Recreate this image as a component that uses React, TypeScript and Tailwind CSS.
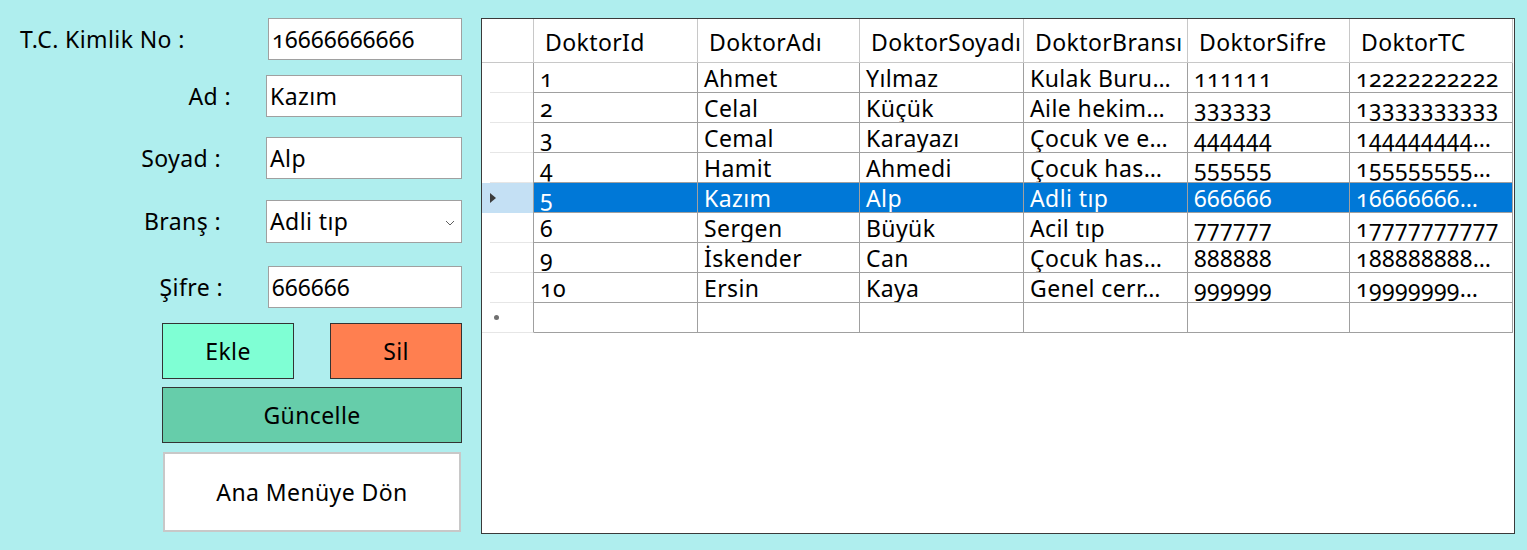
import React from "react";

const FONT = "font-['Noto_Sans',sans-serif] oldstyle-nums tracking-[0.4px]";

const cols = [
  { name: "DoktorId", w: "w-[164px]" },
  { name: "DoktorAdı", w: "w-[162px]" },
  { name: "DoktorSoyadı", w: "w-[164px]" },
  { name: "DoktorBransı", w: "w-[164px]" },
  { name: "DoktorSifre", w: "w-[162px]" },
  { name: "DoktorTC", w: "w-[163px]" },
];

const rows = [
  ["1", "Ahmet", "Yılmaz", "Kulak Buru…", "111111", "12222222222"],
  ["2", "Celal", "Küçük", "Aile hekim…", "333333", "13333333333"],
  ["3", "Cemal", "Karayazı", "Çocuk ve e…", "444444", "144444444…"],
  ["4", "Hamit", "Ahmedi", "Çocuk has…", "555555", "155555555…"],
  ["5", "Kazım", "Alp", "Adli tıp", "666666", "16666666…"],
  ["6", "Sergen", "Büyük", "Acil tıp", "777777", "17777777777"],
  ["9", "İskender", "Can", "Çocuk has…", "888888", "188888888…"],
  ["10", "Ersin", "Kaya", "Genel cerr…", "999999", "19999999…"],
];

function Field({ value }: { value: string }) {
  return (
    <div className="h-full flex-1 border border-[#a0a0a0] bg-white flex items-center pl-[3px] text-black">
      {value}
    </div>
  );
}

export default function App() {
  return (
    <div className={`w-[1527px] h-[550px] bg-[#afeeee] flex text-black ${FONT}`}>
      {/* Left form */}
      <div className="w-[481px] flex flex-col pt-[18px] text-[23px]">
        <div className="flex h-[42px] items-center">
          <div className="w-[268px] pl-[20px]">T.C. Kimlik No :</div>
          <div className="w-[194px] h-full flex"><Field value="16666666666" /></div>
        </div>
        <div className="flex h-[42px] items-center mt-[15px]">
          <div className="w-[266px] text-right pr-[35px]">Ad :</div>
          <div className="w-[196px] h-full flex"><Field value="Kazım" /></div>
        </div>
        <div className="flex h-[42px] items-center mt-[20px]">
          <div className="w-[266px] text-right pr-[45px]">Soyad :</div>
          <div className="w-[196px] h-full flex"><Field value="Alp" /></div>
        </div>
        <div className="flex h-[43px] items-center mt-[21px]">
          <div className="w-[266px] text-right pr-[45px]">Branş :</div>
          <div className="w-[196px] h-full border border-[#a0a0a0] bg-white flex items-center pl-[3px] pr-[6px]">
            <span className="flex-1">Adli tıp</span>
            <svg width="10" height="6" viewBox="0 0 10 6" className="mt-[2px]">
              <path d="M1 1 L5 5 L9 1" fill="none" stroke="#606060" strokeWidth="1" />
            </svg>
          </div>
        </div>
        <div className="flex h-[42px] items-center mt-[23px]">
          <div className="w-[268px] text-right pr-[45px]">Şifre :</div>
          <div className="w-[194px] h-full flex"><Field value="666666" /></div>
        </div>
        <div className="flex mt-[15px] pl-[162px] gap-[36px]">
          <button className="w-[132px] h-[56px] bg-[#7fffd4] border border-[#333] flex items-center justify-center">Ekle</button>
          <button className="w-[132px] h-[56px] bg-[#ff7f50] border border-[#333] flex items-center justify-center">Sil</button>
        </div>
        <button className="mt-[8px] ml-[162px] w-[300px] h-[56px] bg-[#66cdaa] border border-[#333] flex items-center justify-center">Güncelle</button>
        <button className="mt-[9px] ml-[163px] w-[298px] h-[80px] bg-white border-2 border-[#c8c8c8] flex items-center justify-center">Ana Menüye Dön</button>
      </div>

      {/* Data grid */}
      <div className="mt-[18px] w-[1034px] h-[516px] border border-[#3a3a3a] bg-white flex flex-col text-[23px]">
        <div className="flex h-[44px]">
          <div className="w-[52px] border-r border-b border-[#c8c8c8]" />
          {cols.map((c) => (
            <div key={c.name} className={`${c.w} border-r border-b border-[#c8c8c8] overflow-hidden whitespace-nowrap pl-[11px] pt-[4px] flex items-center`}>
              {c.name}
            </div>
          ))}
        </div>
        {rows.map((r, i) => {
          const sel = i === 4;
          return (
            <div key={i} className="flex h-[30px]">
              <div className={`w-[52px] border-r border-[#a0a0a0] flex items-center pl-[8px] ${sel ? "bg-[#c4e0f4]" : ""}`}>
                <div className={`w-full h-full border-b ${sel ? "border-[#c4e0f4]" : "border-[#e6e6e6]"} flex items-center`}>
                  {sel && (
                    <svg width="6" height="10" viewBox="0 0 6 10">
                      <path d="M0 0 L6 5 L0 10 Z" fill="#3c3c3c" />
                    </svg>
                  )}
                </div>
              </div>
              {r.map((v, j) => (
                <div
                  key={j}
                  className={`${cols[j].w} border-r border-b border-[#a0a0a0] overflow-hidden whitespace-nowrap pl-[6px] leading-[27px] pt-[2px] ${sel ? "bg-[#0078d7] text-white" : ""}`}
                >
                  {v}
                </div>
              ))}
            </div>
          );
        })}
        <div className="flex h-[30px]">
          <div className="w-[52px] border-r border-b border-r-[#a0a0a0] border-b-[#e6e6e6] flex items-center pl-[12px]">
            <span className="w-[5px] h-[5px] rounded-full bg-[#707070]" />
          </div>
          {cols.map((c) => (
            <div key={c.name} className={`${c.w} border-r border-b border-[#a0a0a0]`} />
          ))}
        </div>
      </div>
    </div>
  );
}
